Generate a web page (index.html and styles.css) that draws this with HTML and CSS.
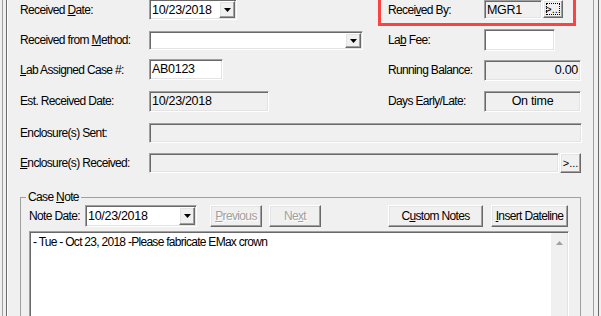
FILE: index.html
```html
<!DOCTYPE html>
<html>
<head>
<meta charset="utf-8">
<link rel="stylesheet" href="styles.css">
</head>
<body>
<div class="window">
  <div class="panel">
    <div class="form-grid">
      <div class="label">Received <u>D</u>ate:</div>
      <div class="field combo w-date">
        <span class="val">10/23/2018</span>
        <span class="btn drop"><svg width="7" height="4" viewBox="0 0 7 4"><polygon points="0,0 7,0 3.5,4" fill="#000"/></svg></span>
      </div>
      <div class="label">Recei<u>v</u>ed By:</div>
      <div class="pair">
        <div class="field ro w-mgr"><span class="val">MGR1</span></div>
        <div class="btn dots focus"><span class="focusring">&gt;...</span></div>
      </div>

      <div class="label">Received from <u>M</u>ethod:</div>
      <div class="field combo w-method">
        <span class="val"></span>
        <span class="btn drop drop-sm"><svg width="7" height="4" viewBox="0 0 7 4"><polygon points="0,0 7,0 3.5,4" fill="#000"/></svg></span>
      </div>
      <div class="label">La<u>b</u> Fee:</div>
      <div class="field w-fee"></div>

      <div class="label"><u>L</u>ab Assigned Case #:</div>
      <div class="field w-case"><span class="val">AB0123</span></div>
      <div class="label">Running Balance:</div>
      <div class="field ro w-right right"><span class="val">0.00</span></div>

      <div class="label">Est. Received Date:</div>
      <div class="field ro w-est"><span class="val">10/23/2018</span></div>
      <div class="label">Days Early/Late:</div>
      <div class="field ro w-right center"><span class="val">On time</span></div>
    </div>

    <div class="row row-sent">
      <div class="label row-label">Enclosure(s) Sent:</div>
      <div class="field ro w-sent"></div>
    </div>

    <div class="row row-recv">
      <div class="label row-label"><u>E</u>nclosure(s) Received:</div>
      <div class="field ro w-recv"></div>
      <div class="btn dots recv-btn">&gt;...</div>
    </div>

    <fieldset class="group">
      <legend>Case <u>N</u>ote</legend>
      <div class="toolbar">
        <div class="label nd-label">Note Date:</div>
        <div class="field combo nd-combo">
          <span class="val">10/23/2018</span>
          <span class="btn drop"><svg width="7" height="4" viewBox="0 0 7 4"><polygon points="0,0 7,0 3.5,4" fill="#000"/></svg></span>
        </div>
        <div class="btn push disabled b-prev"><u>P</u>revious</div>
        <div class="btn push disabled b-next">Ne<u>x</u>t</div>
        <div class="btn push b-custom">C<u>u</u>stom Notes</div>
        <div class="btn push b-insert"><u>I</u>nsert Dateline</div>
      </div>
      <div class="memo">
        <div class="memo-text">- Tue - Oct 23, 2018 -Please fabricate EMax crown</div>
        <div class="scroll">
          <svg width="7" height="4" viewBox="0 0 7 4" class="up"><polygon points="3.5,0 7,4 0,4" fill="#a0a0a0"/></svg>
        </div>
      </div>
    </fieldset>
  </div>
  <div class="callout"></div>
</div>
</body>
</html>
```
FILE: styles.css
```css
* { box-sizing: border-box; }

body {
  margin: 0;
  background: #f0f0f0;
  font-family: "Liberation Sans", Arial, sans-serif;
  font-size: 12px;
  letter-spacing: -0.65px;
  color: #000;
  overflow: hidden;
}

.window {
  position: relative;
  margin-left: 2px;
  width: 597px;
  height: 316px;
  border-left: 1px solid #a0a0a0;
  border-right: 1px solid #696969;
  display: flex;
  overflow: hidden;
}

.panel {
  margin-left: 3px;
  width: 588px;
  height: 316px;
  border-left: 1px solid #696969;
  border-right: 1px solid #a0a0a0;
  padding-left: 13px;
  box-shadow: inset 1px 0 0 #fff;
}

.form-grid {
  display: grid;
  grid-template-columns: 129px 239px 96px 97px;
  grid-template-rows: 20px 20px 21px 21px;
  row-gap: 10px;
  align-items: start;
}

.label {
  line-height: 20px;
  white-space: nowrap;
}

.field {
  height: 20px;
  border: 1px solid;
  border-color: #a0a0a0 #fff #fff #a0a0a0;
  box-shadow: inset 1px 1px 0 #696969, inset -1px -1px 0 #e3e3e3;
  background: #fff;
  font-size: 12.5px;
  letter-spacing: -0.3px;
  padding: 0 2px 0 2px;
  line-height: 18px;
  white-space: nowrap;
}
.field.ro { background: #f0f0f0; }
.field.right { text-align: right; }
.field.center { text-align: center; }

.combo {
  display: flex;
  align-items: center;
  justify-content: space-between;
  padding-right: 1px;
}

.btn {
  background: #f0f0f0;
  border: 1px solid;
  border-color: #fff #696969 #696969 #fff;
  box-shadow: inset -1px -1px 0 #a0a0a0, inset 1px 1px 0 #e3e3e3;
  display: flex;
  align-items: center;
  justify-content: center;
  white-space: nowrap;
}

.drop {
  width: 16px;
  height: 17px;
}
.drop svg { display: block; }
.drop-sm { height: 15px; }

.w-date { width: 88px; height: 21px; margin-top: -1px; }
.w-method { width: 214px; height: 19px; margin-top: 1px; }
.w-fee { width: 71px; height: 22px; margin-top: -1px; }
.w-case { width: 74px; height: 21px; margin-top: -1px; }
.w-est { width: 120px; height: 21px; }
.w-right { width: 97px; height: 21px; }

.pair { display: flex; gap: 1px; align-items: flex-start; }
.w-mgr { width: 58px; height: 19px; }
.dots {
  width: 20px;
  height: 18px;
  font-size: 11px;
  letter-spacing: 0;
}
.focusring {
  border: 1px dotted #000;
  padding: 0 1px;
  line-height: 11px;
  width: 14px;
  height: 12px;
  display: flex;
  align-items: center;
  justify-content: center;
}

.row {
  display: flex;
  align-items: center;
  height: 20px;
}
.row-label { width: 129px; }
.row-sent { margin-top: 11px; }
.row-recv { margin-top: 10px; }
.w-sent { width: 433px; }
.w-recv { width: 410px; }
.recv-btn { width: 21px; height: 20px; margin-left: 1px; }

.group {
  margin: 18px 0 0 0;
  width: 561px;
  min-width: 0;
  padding: 0 11px 0 8px;
  border: 1px solid #a0a0a0;
}
.group legend {
  margin-left: -3px;
  padding: 0 2px;
  line-height: 13px;
}

.toolbar {
  display: flex;
  align-items: center;
  height: 22px;
  margin-top: 1px;
}
.nd-label { width: 56px; }
.nd-combo { width: 112px; height: 22px; }
.nd-combo .drop { height: 18px; }

.push { height: 22px; }
.disabled { color: #a0a0a0; text-shadow: 1px 1px 0 #fff; }
.b-prev { width: 52px; margin-left: 13px; }
.b-next { width: 52px; margin-left: 7px; }
.b-custom { width: 95px; margin-left: 67px; }
.b-insert { width: 77px; margin-left: 8px; }

.memo {
  margin-top: 4px;
  width: 540px;
  height: 110px;
  display: flex;
  background: #fff;
  border: 1px solid;
  border-color: #a0a0a0 #fff #fff #a0a0a0;
  box-shadow: inset 1px 1px 0 #696969, inset -1px -1px 0 #e3e3e3;
  padding: 1px 1px 0 1px;
}
.memo-text {
  flex: 1;
  padding: 1px 2px;
  line-height: 16px;
  white-space: nowrap;
  letter-spacing: -0.72px;
}
.scroll {
  width: 17px;
  background: #f0f0f0;
  border-left: 1px solid #fff;
  display: flex;
  justify-content: center;
  padding-top: 8px;
}
.scroll .up { display: block; }

.callout {
  position: absolute;
  left: 375px;
  top: -10px;
  width: 198px;
  height: 36px;
  border: 3px solid #fa4444;
  pointer-events: none;
}
```
